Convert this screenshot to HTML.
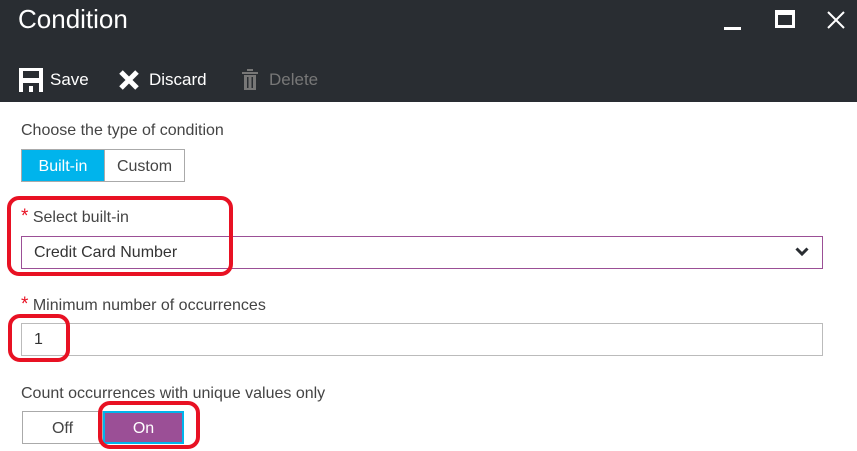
<!DOCTYPE html>
<html><head><meta charset="utf-8"><style>
*{margin:0;padding:0;box-sizing:border-box}
body{width:857px;height:451px;background:#fff;font-family:"Segoe UI","Liberation Sans",sans-serif;position:relative;overflow:hidden;color:#333}
.hdr{position:absolute;left:0;top:0;width:857px;height:102px;background:#292d32;color:#fff}
.t{position:absolute;left:18px;top:4px;font-size:26px;color:#fff;font-weight:normal}
.a{position:absolute;top:70px;font-size:17px;color:#fff}
.abs{position:absolute}
.lbl{position:absolute;font-size:16px;color:#444}
.star{color:#e81123;font-size:19px;line-height:16px}
.red{position:absolute;border:4px solid #e81123;border-radius:12px}
</style></head><body>
<div class="hdr">
<div class="t">Condition</div>
<div class="abs" style="left:724px;top:27px;width:17px;height:3px;background:#fff"></div>
<div class="abs" style="left:775px;top:10px;width:20px;height:18px;border:3px solid #fff;border-top-width:5px"></div>
<svg class="abs" style="left:826px;top:10px" width="20" height="20"><path d="M2 2L18 18M18 2L2 18" stroke="#fff" stroke-width="2"/></svg>
<svg class="abs" style="left:19px;top:68px" width="24" height="24"><path d="M0 0H24V24H0Z" fill="#fff"/><rect x="4" y="3" width="16" height="7" fill="#292d32"/><rect x="4" y="15" width="16" height="9" fill="#292d32"/><rect x="10" y="18" width="4" height="6" fill="#fff"/></svg>
<div class="a" style="left:50px">Save</div>
<svg class="abs" style="left:118px;top:69px" width="22" height="22"><path d="M3 3L19 19M19 3L3 19" stroke="#fff" stroke-width="5"/></svg>
<div class="a" style="left:149px">Discard</div>
<svg class="abs" style="left:242px;top:69px" width="16" height="21"><rect x="5" y="0" width="6" height="2" fill="#777"/><rect x="0" y="3" width="16" height="2" fill="#777"/><rect x="2" y="6" width="12" height="15" fill="#777"/><rect x="5" y="8" width="1.5" height="11" fill="#292d32"/><rect x="9.5" y="8" width="1.5" height="11" fill="#292d32"/></svg>
<div class="a" style="left:269px;color:#777">Delete</div>
</div>
<div class="lbl" style="left:21px;top:122px">Choose the type of condition</div>
<div class="abs" style="left:21px;top:149px;width:164px;height:33px;border:1px solid #aaa"></div>
<div class="abs" style="left:22px;top:150px;width:82px;height:31px;background:#00b4ec;color:#fff;font-size:16px;text-align:center;line-height:33px">Built-in</div>
<div class="abs" style="left:104px;top:150px;width:80px;height:31px;color:#444;font-size:16px;text-align:center;line-height:33px;border-left:1px solid #aaa">Custom</div>
<div class="lbl" style="left:21px;top:209px"><span class="star">*</span> Select built-in</div>
<div class="abs" style="left:21px;top:236px;width:802px;height:33px;border:1px solid #9b4f96"></div>
<div class="lbl" style="left:34px;top:244px;color:#333">Credit Card Number</div>
<svg class="abs" style="left:795px;top:247px" width="14" height="10"><path d="M1.5 1.5L7 7L12.5 1.5" stroke="#292d32" stroke-width="3" fill="none"/></svg>
<div class="red" style="left:7px;top:196px;width:226px;height:80px"></div>
<div class="lbl" style="left:21px;top:297px"><span class="star">*</span> Minimum number of occurrences</div>
<div class="abs" style="left:21px;top:323px;width:802px;height:33px;border:1px solid #bbb"></div>
<div class="lbl" style="left:34px;top:331px;color:#333">1</div>
<div class="red" style="left:8px;top:314px;width:62px;height:48px"></div>
<div class="lbl" style="left:21px;top:385px">Count occurrences with unique values only</div>
<div class="abs" style="left:22px;top:411px;width:81px;height:33px;border:1px solid #aaa;font-size:16px;text-align:center;line-height:33px;color:#444">Off</div>
<div class="abs" style="left:103px;top:411px;width:81px;height:33px;background:#9b4f96;border:2px solid #00b4ec;color:#fff;font-size:16px;text-align:center;line-height:31px">On</div>
<div class="red" style="left:98px;top:401px;width:102px;height:48px"></div>
</body></html>
